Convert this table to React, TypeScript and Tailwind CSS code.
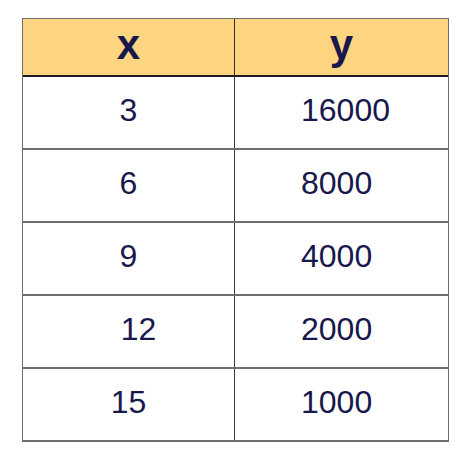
import React from "react";

const rows: { x: string; y: string; xClass: string }[] = [
  { x: "3", y: "16000", xClass: "justify-center" },
  { x: "6", y: "8000", xClass: "justify-center" },
  { x: "9", y: "4000", xClass: "justify-center" },
  { x: "12", y: "2000", xClass: "justify-center pl-[20px]" },
  { x: "15", y: "1000", xClass: "justify-center" },
];

export default function App() {
  return (
    <div
      className="w-[474px] h-[463px] bg-white pl-[22px] pt-[18px]"
      style={{ fontFamily: '"Liberation Sans", Arial, sans-serif' }}
    >
      <div className="w-[427px] border-l border-r border-t border-[#6e6e6e] border-b-2 border-b-[#6e6e6e]">
        <div className="flex h-[58px] bg-[#fdd480] border-b-2 border-[#1e1e1e]">
          <div className="w-[212px] flex items-center justify-center pb-[5px] border-r border-[#2e2e2e] text-[42px] leading-none font-bold text-[#18184c]">
            x
          </div>
          <div className="flex-1 flex items-center justify-center pb-[5px] text-[42px] leading-none font-bold text-[#18184c]">
            y
          </div>
        </div>
        {rows.map((r, i) => (
          <div
            key={r.x}
            className={
              i < rows.length - 1
                ? "flex h-[73px] border-b-2 border-[#6e6e6e]"
                : "flex h-[71px]"
            }
          >
            <div
              className={
                "w-[212px] flex items-center pb-[5px] border-r border-[#3a3a3a] text-[32px] leading-none text-[#18184c] " +
                r.xClass
              }
            >
              {r.x}
            </div>
            <div className="flex-1 flex items-center pl-[66px] pb-[5px] text-[32px] leading-none text-[#18184c]">
              {r.y}
            </div>
          </div>
        ))}
      </div>
    </div>
  );
}
